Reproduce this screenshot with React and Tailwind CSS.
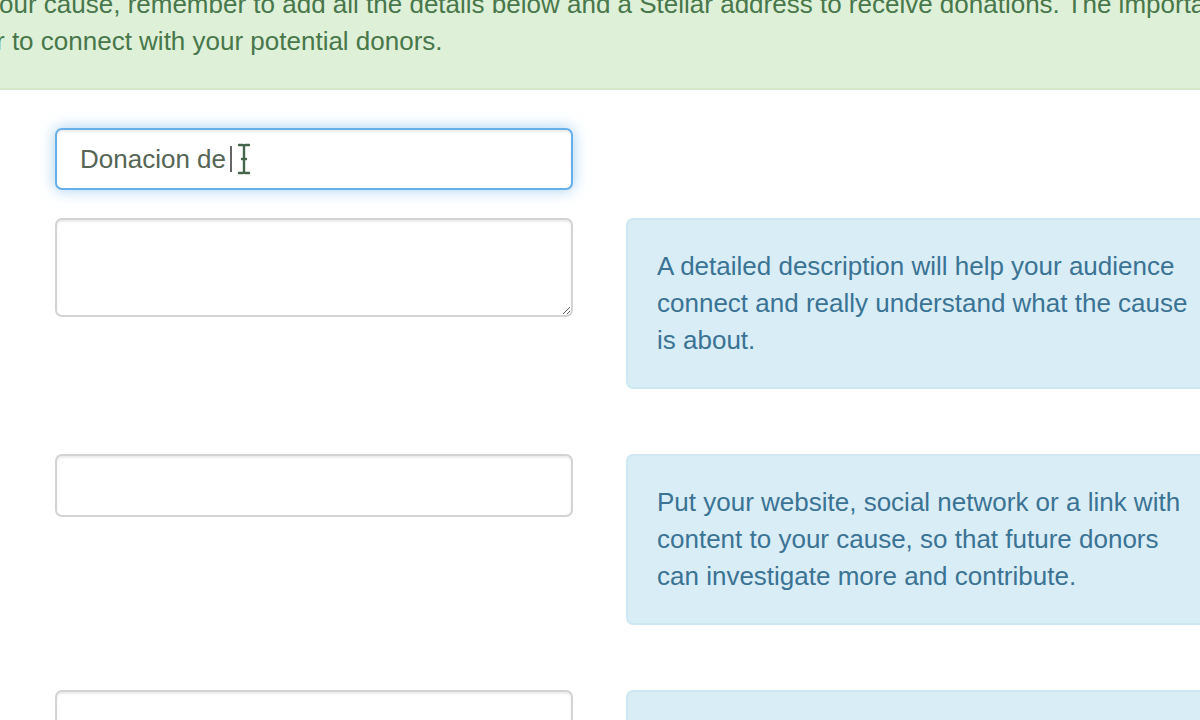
import { useState } from 'react'

const HINTS = [
  'A detailed description will help your audience connect and really understand what the cause is about.',
  'Put your website, social network or a link with content to your cause, so that future donors can investigate more and contribute.',
  'The Stellar address where the donations for your cause will be received.',
]

function Hint({ text }) {
  return (
    <div className="w-[602px] shrink-0 mb-[37px] rounded-[7px] border-2 border-[#cde8f2] bg-[#d9edf7] px-[29px] py-[28px] text-[#3a7394]">
      <p className="w-[540px]">{text}</p>
    </div>
  )
}

// the mouse I-beam that sits over the title field
function IBeam() {
  return (
    <svg width="14" height="32" viewBox="0 0 14 32" className="ml-[5px]">
      <path d="M2 2h3.5C6.5 2 7 2.6 7 3.5M12 2H8.5C7.5 2 7 2.6 7 3.5V28.5c0 .9-.5 1.5-1.5 1.5H2M7 28.5c0 .9.5 1.5 1.5 1.5H12M5 16h4" fill="none" stroke="#45654d" strokeWidth="2.4" strokeLinecap="round" />
    </svg>
  )
}

export default function App() {
  const [titulo] = useState('Donacion de')

  return (
    <div className="h-[720px] overflow-hidden bg-white text-[26px] leading-[37px]" style={{ fontFamily: '"Liberation Sans", Arial, sans-serif' }}>
      {/* Alert */}
      <div className="-mt-[42px] border-b-2 border-[#d6e9c6] bg-[#dff0d8] py-[28px] text-[#47774a] whitespace-nowrap">
        <div className="-ml-[1px]">our cause, remember to add all the details below and a Stellar address to receive donations. The important thing is</div>
        <div className="-ml-[4px]">r to connect with your potential donors.</div>
      </div>

      {/* Form */}
      <div className="mt-[38px] flex flex-col gap-[28px] pl-[55px]">
        <div className="flex h-[62px] w-[518px] items-center rounded-[7px] border-2 border-[#66afe9] bg-white pl-[23px] text-[#566556] shadow-[inset_0_2px_2px_rgba(0,0,0,0.075),0_0_15px_rgba(102,175,233,0.6)]">
          <span>{titulo}</span>
          <span className="ml-[4px] h-[26px] w-[2px] bg-[#666]" />
          <IBeam />
        </div>

        <div className="flex gap-[53px]">
          <textarea
            rows={2}
            className="h-[99px] w-[518px] shrink-0 rounded-[7px] border-2 border-[#d3d3d3] bg-white outline-none shadow-[inset_0_2px_2px_rgba(0,0,0,0.075)]"
          />
          <Hint text={HINTS[0]} />
        </div>

        <div className="flex gap-[53px]">
          <input
            type="text"
            className="h-[63px] w-[518px] shrink-0 rounded-[7px] border-2 border-[#d3d3d3] bg-white outline-none shadow-[inset_0_2px_2px_rgba(0,0,0,0.075)]"
          />
          <Hint text={HINTS[1]} />
        </div>

        <div className="flex gap-[53px]">
          <input
            type="text"
            className="h-[63px] w-[518px] shrink-0 rounded-[7px] border-2 border-[#d3d3d3] bg-white outline-none shadow-[inset_0_2px_2px_rgba(0,0,0,0.075)]"
          />
          <Hint text={HINTS[2]} />
        </div>
      </div>
    </div>
  )
}
